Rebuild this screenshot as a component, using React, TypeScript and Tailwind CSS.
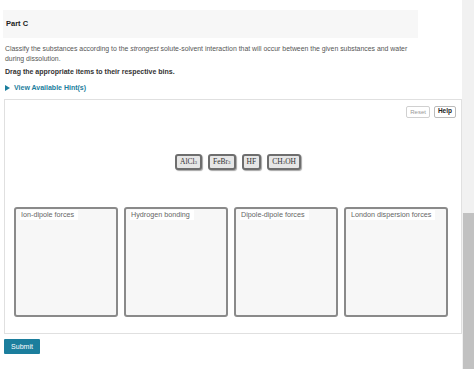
import React from 'react';

const TOKENS: { base: string; sub?: string; rest?: string }[] = [
  { base: 'AlCl', sub: '3' },
  { base: 'FeBr', sub: '3' },
  { base: 'HF' },
  { base: 'CH', sub: '3', rest: 'OH' },
];

const BINS = ['Ion-dipole forces', 'Hydrogen bonding', 'Dipole-dipole forces', 'London dispersion forces'];

const Token: React.FC<{ base: string; sub?: string; rest?: string }> = ({ base, sub, rest }) => (
  <div className="h-[16px] px-[3px] flex items-center rounded-[3px] border-2 border-[#6e6e6e] bg-[#e6e6e6] shadow-[1px_1px_1px_rgba(0,0,0,0.35)] text-[7.5px] text-[#333] font-['Liberation_Serif',serif] leading-none">
    {base}
    {sub && <sub className="text-[5px] align-[-1px]">{sub}</sub>}
    {rest}
  </div>
);

export default function App() {
  return (
    <div className="w-[474px] h-[369px] bg-white flex font-['Liberation_Sans',Arial,sans-serif] overflow-hidden">
      <div className="flex-1 flex flex-col pl-[3px] pt-[10px]">
        {/* Part header */}
        <div className="w-[415px] h-[28px] bg-[#f7f7f7] flex items-center px-[3px]">
          <span className="text-[7.5px] font-bold text-[#222]">Part C</span>
        </div>

        <p className="mt-[6px] pl-[2px] pr-[47px] text-[6.9px] leading-[10px] text-[#555]">
          Classify the substances according to the <i>strongest</i> solute-solvent interaction that will occur between the given substances and water during dissolution.
        </p>
        <p className="mt-[3px] pl-[2px] text-[7px] leading-[10px] font-bold text-[#333]">
          Drag the appropriate items to their respective bins.
        </p>

        <div className="mt-[6px] pl-[2px] flex items-center gap-[4px] text-[7px] font-bold text-[#1b7e9d]">
          <svg width="5" height="6" viewBox="0 0 5 6"><path d="M0 0 L5 3 L0 6 Z" fill="#1b7e9d" /></svg>
          <span>View Available Hint(s)</span>
        </div>

        {/* Activity box */}
        <div className="mt-[5px] ml-[1px] h-[235px] border border-[#e0e0e0] flex flex-col">
          <div className="flex justify-end gap-[4px] pt-[6px] pr-[5px]">
            <button className="h-[12px] px-[3px] border border-[#d0d0d0] rounded-[2px] text-[6px] text-[#999] leading-none bg-white">Reset</button>
            <button className="h-[12px] px-[3px] border border-[#bbb] rounded-[2px] text-[6.5px] font-bold text-[#222] leading-none bg-white">Help</button>
          </div>

          <div className="flex justify-center gap-[6px] mt-[36px] pl-[10px]">
            {TOKENS.map((t, i) => (
              <Token key={i} {...t} />
            ))}
          </div>

          <div className="flex gap-[6px] mt-[37px] pl-[9px]">
            {BINS.map(b => (
              <div key={b} className="w-[104px] h-[110px] rounded-[3px] border-2 border-[#8a8a8a] bg-[#f7f7f7] relative">
                <span className="absolute left-[4px] top-[1px] bg-white pl-[1px] pr-[4px] text-[7.2px] leading-[10px] text-[#666]">{b}</span>
              </div>
            ))}
          </div>
        </div>

        <div className="mt-[5px] ml-[1px] flex">
          <button className="h-[15px] w-[36px] bg-[#1b7e9d] text-white text-[7px] leading-none rounded-[1px]">Submit</button>
        </div>
      </div>

      {/* scrollbar */}
      <div className="w-[12px] h-full bg-[#f1f1f1] flex flex-col">
        <div className="h-[213px]" />
        <div className="flex-1 bg-[#c1c1c1] ml-[1px]" />
      </div>
    </div>
  );
}
